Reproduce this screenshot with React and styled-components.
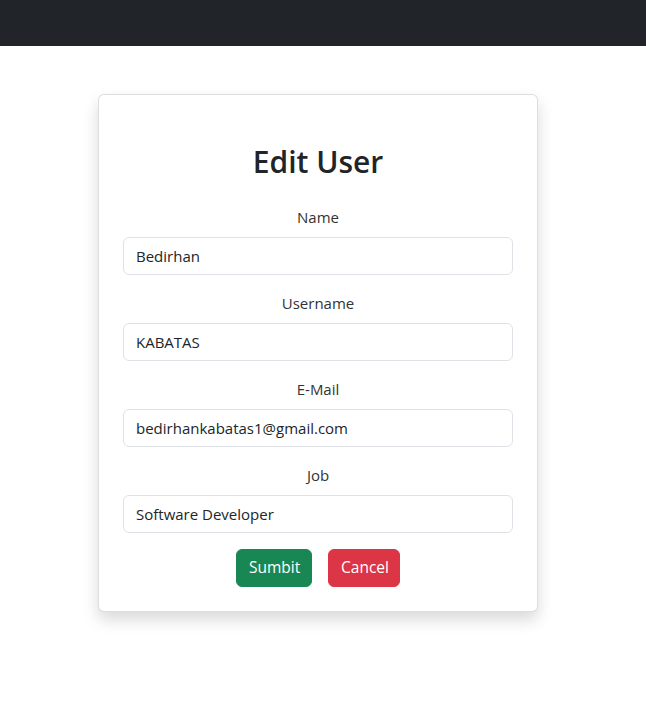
import React from "react";
import styled, { createGlobalStyle } from "styled-components";

const Global = createGlobalStyle`
  * { box-sizing: border-box; }
  body {
    margin: 0;
    font-family: "Open Sans", "Noto Sans", sans-serif;
    font-size: 16px;
    line-height: 1.5;
    color: #212529;
    background: #fff;
  }
`;

const NavBar = styled.nav`
  height: 46px;
  background: #212529;
`;

const Page = styled.main`
  padding: 48px 0 48px 98px;
`;

const Card = styled.form`
  width: 440px;
  border: 1px solid rgba(0, 0, 0, 0.13);
  border-radius: 6px;
  box-shadow: 0 8px 16px rgba(0, 0, 0, 0.15);
  padding: 24px;
  background: #fff;
`;

const Title = styled.h1`
  margin: 24px 0 24px;
  font-size: 30px;
  font-weight: 600;
  line-height: 38px;
  text-align: center;
`;

const Field = styled.div`
  margin-bottom: 16px;
  display: flex;
  flex-direction: column;
`;

const Label = styled.label`
  text-align: center;
  margin-bottom: 8px;
  font-size: 15px;
  line-height: 24px;
  color: #333;
`;

const Input = styled.input`
  height: 38px;
  width: 100%;
  padding: 6px 12px;
  font: inherit;
  font-size: 15px;
  color: #212529;
  border: 1px solid #dee2e6;
  border-radius: 6px;
  outline: none;
`;

const Actions = styled.div`
  display: flex;
  justify-content: center;
  gap: 16px;
`;

const Button = styled.button`
  height: 38px;
  padding: 6px 12px;
  font: inherit;
  font-size: 15.5px;
  color: #fff;
  border: 1px solid ${(p) => p.$bg};
  background: ${(p) => p.$bg};
  border-radius: 6px;
  width: ${(p) => p.$w}px;
`;

const fields = [
  ["Name", "Bedirhan"],
  ["Username", "KABATAS"],
  ["E-Mail", "bedirhankabatas1@gmail.com"],
  ["Job", "Software Developer"],
];

export default function App() {
  return (
    <>
      <Global />
      <NavBar />
      <Page>
        <Card onSubmit={(e) => e.preventDefault()}>
          <Title>Edit User</Title>
          {fields.map(([l, v]) => (
            <Field key={l}>
              <Label>{l}</Label>
              <Input defaultValue={v} />
            </Field>
          ))}
          <Actions>
            <Button type="submit" $bg="#198754" $w={76}>Sumbit</Button>
            <Button type="button" $bg="#dc3545" $w={72}>Cancel</Button>
          </Actions>
        </Card>
      </Page>
    </>
  );
}
